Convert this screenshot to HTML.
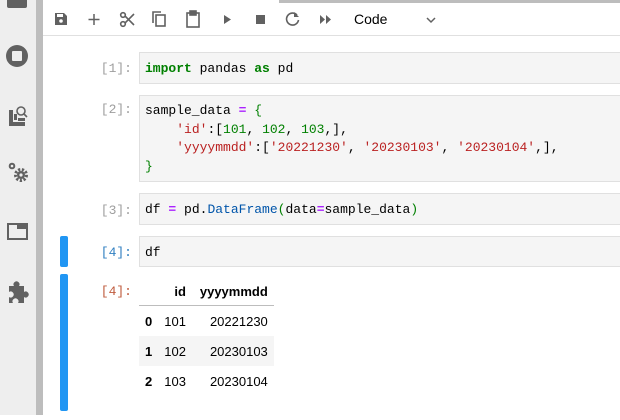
<!DOCTYPE html>
<html><head><style>
body{margin:0;width:620px;height:415px;overflow:hidden;background:#fff;font-family:"Liberation Sans",sans-serif;position:relative}
.side{position:absolute;left:0;top:0;width:36px;height:415px;background:#eeeeee}
.stripe{position:absolute;left:36px;top:0;width:7px;height:415px;background:#bdbdbd}
.topbar{position:absolute;left:279px;top:0;width:341px;height:3px;background:#bdbdbd}
.tb{position:absolute;left:43px;top:0;width:577px;height:35px;border-bottom:1px solid #e0e0e0}
.cell{position:absolute;left:139px;width:481px;background:#f5f5f5;border:1px solid #e0e0e0;border-right:none;box-sizing:border-box;font-family:"Liberation Mono",monospace;font-size:13px;color:#000;padding:0 0 0 5px;white-space:pre;line-height:18.5px}
.pr{position:absolute;width:60px;left:72px;text-align:right;font-family:"Liberation Mono",monospace;font-size:13px;color:#9e9e9e}
.k{color:#008000;font-weight:bold}.o{color:#aa22ff;font-weight:bold}.s{color:#ba2121}.n{color:#008000}.f{color:#0055aa}.b{color:#008000}
.bar{position:absolute;left:60px;width:8px;background:#2196f3;border-radius:2px}
table{position:absolute;left:139px;top:277px;border-collapse:collapse;font-family:"Liberation Sans",sans-serif;font-size:13px}
td,th{height:30px;padding:0 6px;text-align:right}
th{height:28px}
thead tr{border-bottom:1px solid #bdbdbd}
tbody tr:nth-child(2){background:#f5f5f5}
</style></head><body>
<div class="side">
<svg width="36" height="415" viewBox="0 0 36 415" fill="#616161">
<rect x="7" y="-8" width="20" height="16" rx="2"/>
<circle cx="17" cy="56" r="11"/><rect x="12" y="51" width="10" height="10" fill="#eee" rx="1"/>
<path d="M9 110h4v12h12v4H9z M14 114h3v6h-3z M18 118h7v3h-7z"/><circle cx="21" cy="111" r="4" fill="none" stroke="#616161" stroke-width="1.6"/><path d="M24 114l3 3" stroke="#616161" stroke-width="1.6"/>
<circle cx="12" cy="166" r="2.3" fill="none" stroke="#616161" stroke-width="2"/>
<circle cx="21" cy="175" r="5.5" fill="none" stroke="#616161" stroke-width="3" stroke-dasharray="2.2 1.6"/><circle cx="21" cy="175" r="4"/><circle cx="21" cy="175" r="1.6" fill="#eee"/>
<rect x="8" y="224" width="19" height="15" fill="none" stroke="#616161" stroke-width="2"/><rect x="17" y="224" width="10" height="5"/>
<path d="M9 286h5a3 3 0 1 1 5 0h5v6a3 3 0 1 1 0 5v6h-6a3 3 0 1 0-5 0H9v-6a3 3 0 1 0 0-5z"/>
</svg></div>
<div class="stripe"></div>
<div class="topbar"></div>
<div class="tb">
<svg width="577" height="35" viewBox="43 0 577 35" fill="#616161">
<path d="M55 13h9l3 3v9H55z"/><rect x="57" y="14" width="6" height="3" fill="#fff"/><circle cx="61" cy="21" r="1.8" fill="#fff"/>
<path d="M94 14v11M88.5 19.5h11" stroke="#616161" stroke-width="1.5"/>
<g fill="none" stroke="#616161" stroke-width="1.6"><circle cx="123" cy="24" r="2.3"/><circle cx="123" cy="15" r="2.3"/><path d="M125 16l9 9M125 23l9-9"/>
<rect x="156" y="15" width="9" height="11"/><path d="M153 23V12h8"/>
<rect x="187" y="13" width="12" height="14"/><rect x="190" y="11" width="6" height="4" fill="#616161"/>
<path d="M297 15a6 6 0 1 0 1.5 5"/></g>
<path d="M224 15v9l7-4.5z"/><rect x="256" y="15" width="9" height="9"/><path d="M294 12v5h5z"/>
<path d="M320 15v9l5-4.5zM326 15v9l5-4.5z"/>
<path d="M427 18l4 4 4-4" fill="none" stroke="#616161" stroke-width="1.5"/>
</svg>
<div style="position:absolute;left:311px;top:11px;font-size:14px;color:#000">Code</div>
</div>

<div class="pr" style="top:61px">[1]:</div>
<div class="cell" style="top:52px;height:32px;padding-top:7px"><span class="k">import</span> pandas <span class="k">as</span> pd</div>

<div class="pr" style="top:102px">[2]:</div>
<div class="cell" style="top:95px;height:87px;padding-top:6px">sample_data <span class="o">=</span> <span class="b">{</span>
    <span class="s">'id'</span>:[<span class="n">101</span>, <span class="n">102</span>, <span class="n">103</span>,],
    <span class="s">'yyyymmdd'</span>:[<span class="s">'20221230'</span>, <span class="s">'20230103'</span>, <span class="s">'20230104'</span>,],
<span class="b">}</span></div>

<div class="pr" style="top:203px">[3]:</div>
<div class="cell" style="top:193px;height:32px;padding-top:7px">df <span class="o">=</span> pd<span>.</span><span class="f">DataFrame</span><span class="b">(</span>data<span class="o">=</span>sample_data<span class="b">)</span></div>

<div class="bar" style="top:236px;height:31px"></div>
<div class="pr" style="top:245px;color:#307fc1">[4]:</div>
<div class="cell" style="top:236px;height:31px;padding-top:7px">df</div>

<div class="bar" style="top:274px;height:137px"></div>
<div class="pr" style="top:284px;color:#bf5b3d">[4]:</div>
<table>
<thead><tr><th></th><th>id</th><th>yyyymmdd</th></tr></thead>
<tbody>
<tr><th>0</th><td>101</td><td style="padding-left:18px">20221230</td></tr>
<tr><th>1</th><td>102</td><td style="padding-left:18px">20230103</td></tr>
<tr><th>2</th><td>103</td><td style="padding-left:18px">20230104</td></tr>
</tbody></table>
</body></html>
